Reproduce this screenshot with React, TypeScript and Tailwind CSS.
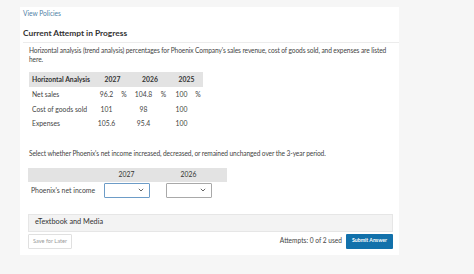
import React from "react";

const font = { fontFamily: "Lato, 'Open Sans', sans-serif" };

function Chevron() {
  return (
    <svg width="6" height="4" viewBox="0 0 6 4" className="mr-[5px]">
      <path d="M0.8 0.8 L3 3 L5.2 0.8" fill="none" stroke="#555" strokeWidth="0.9" />
    </svg>
  );
}

function Select({ focused }: { focused?: boolean }) {
  return (
    <div
      className={
        "w-[46px] h-[15px] bg-white flex items-center justify-end rounded-[1px] border " +
        (focused ? "border-[#6d9cc7]" : "border-[#a9a9a9]")
      }
    >
      <Chevron />
    </div>
  );
}

const rows = [
  { label: "Net sales", v: ["96.2", "104.8", "100"], pct: true },
  { label: "Cost of goods sold", v: ["101", "98", "100"], pct: false },
  { label: "Expenses", v: ["105.6", "95.4", "100"], pct: false },
];

export default function App() {
  return (
    <div className="w-[474px] h-[274px] bg-[#f6f6f6] pt-[7px] overflow-hidden" style={font}>
      <div className="ml-[20px] w-[379px] h-[248px] bg-white flex flex-col">
        <div className="pl-[3px] pt-[1px] h-[10px] leading-[10px] text-[6.6px] text-[#4f7fa6]">View Policies</div>
        <div className="pl-[3px] mt-[11px] h-[10px] leading-[10px] text-[8.4px] font-bold text-[#333]">
          Current Attempt in Progress
        </div>
        <div className="ml-[3px] mt-[4px] h-px bg-[#ececec]" />
        <div className="pl-[9px] mt-[3px] text-[6.6px] leading-[9px] tracking-[-0.1px] text-[#444] whitespace-nowrap">
          <div>
            Horizontal analysis (trend analysis) percentages for Phoenix Company's sales revenue, cost of goods sold, and expenses are listed
          </div>
          <div>here.</div>
        </div>

        <div className="ml-[9px] mt-[8px] w-[174px] text-[6.8px] text-[#444]">
          <div className="grid grid-cols-[66px_35px_40px_33px] h-[15px] items-center bg-[#e3e3e3] font-bold text-[#333]">
            <div className="pl-[3px] whitespace-nowrap">Horizontal Analysis</div>
            <div className="text-center">2027</div>
            <div className="text-center">2026</div>
            <div className="text-center">2025</div>
          </div>
          {rows.map((r) => (
            <div
              key={r.label}
              className="grid grid-cols-[66px_23px_12px_27px_13px_23px_10px] h-[14.5px] items-center"
            >
              <div className="pl-[3px] whitespace-nowrap">{r.label}</div>
              <div className="text-center">{r.v[0]}</div>
              <div className="text-center">{r.pct ? "%" : ""}</div>
              <div className="text-center">{r.v[1]}</div>
              <div className="text-center">{r.pct ? "%" : ""}</div>
              <div className="text-center">{r.v[2]}</div>
              <div className="text-center">{r.pct ? "%" : ""}</div>
            </div>
          ))}
        </div>

        <div className="pl-[9px] mt-[18px] h-[9px] leading-[9px] text-[6.6px] tracking-[-0.1px] text-[#444] whitespace-nowrap">
          Select whether Phoenix's net income increased, decreased, or remained unchanged over the 3-year period.
        </div>

        <div className="ml-[8px] mt-[10px] w-[199px] text-[6.8px] text-[#444]">
          <div className="grid grid-cols-[68px_61px_63px_7px] h-[14px] items-center bg-[#e3e3e3] text-[#333]">
            <div />
            <div className="text-center">2027</div>
            <div className="text-center">2026</div>
            <div />
          </div>
          <div className="grid grid-cols-[68px_61px_63px] h-[17px] items-center">
            <div className="pl-[3px] whitespace-nowrap text-[6.9px]">Phoenix's net income</div>
            <div className="flex justify-center">
              <Select focused />
            </div>
            <div className="flex justify-center">
              <Select />
            </div>
          </div>
        </div>

        <div className="ml-[8px] mt-[15px] w-[365px] h-[18px] bg-[#f3f3f3] border border-[#e6e6e6] flex items-center pl-[6px] text-[7.3px] text-[#333]">
          eTextbook and Media
        </div>

        <div className="ml-[8px] mt-[2px] w-[365px] flex items-center justify-between">
          <div className="w-[44px] h-[15px] border border-[#e0e0e0] rounded-[1px] flex items-center justify-center text-[5.6px] text-[#9a9a9a]">
            Save for Later
          </div>
          <div className="flex items-center gap-[4px]">
            <span className="text-[6.6px] text-[#444]">Attempts: 0 of 2 used</span>
            <div className="w-[47px] h-[15px] bg-[#1271ab] rounded-[1px] flex items-center justify-center text-[5.2px] font-bold text-white">
              Submit Answer
            </div>
          </div>
        </div>
      </div>
    </div>
  );
}
